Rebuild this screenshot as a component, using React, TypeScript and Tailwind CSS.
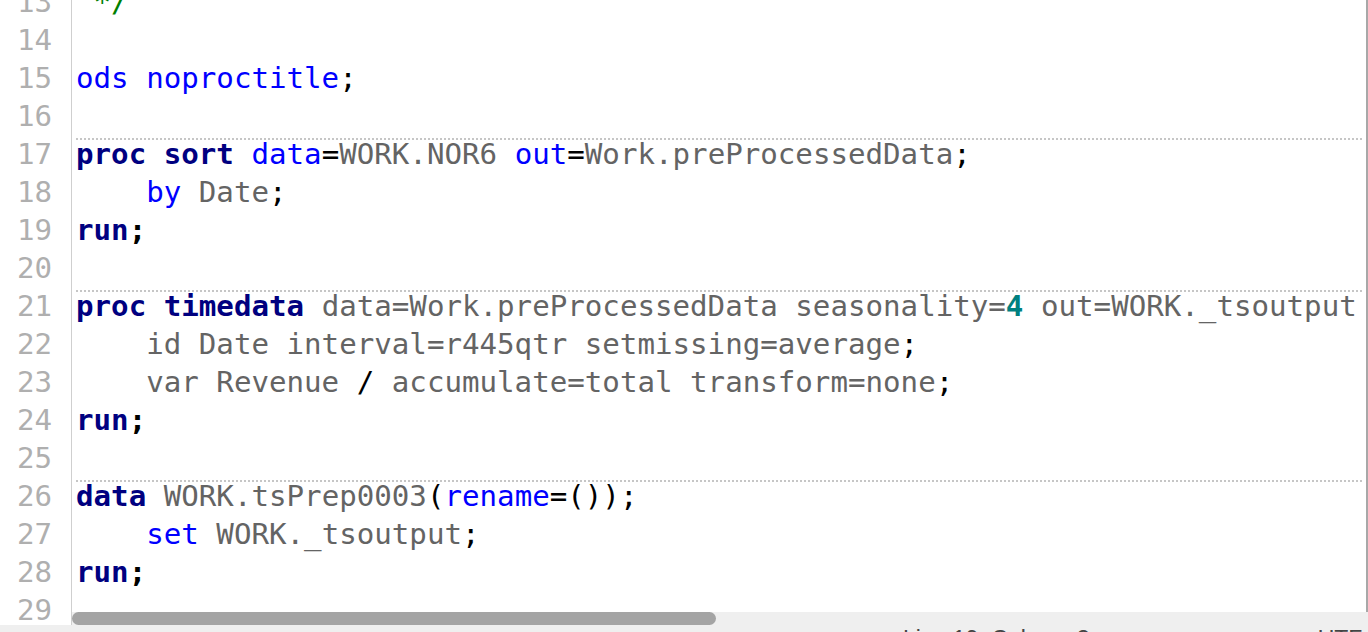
import React from "react";

type Tok = [string, string];

// token colours, SAS editor style
const K = "text-[#000080] font-bold";
const B = "text-[#0000ff]";
const G = "text-[#646464]";
const P = "text-black";
const PB = "text-black font-bold";
const N = "text-[#008080] font-bold";
const C = "text-[#008000]";

const lines: { n: number; sep?: boolean; toks: Tok[] }[] = [
  { n: 13, toks: [[" */", C]] },
  { n: 14, toks: [] },
  { n: 15, toks: [["ods noproctitle", B], [";", P]] },
  { n: 16, toks: [] },
  {
    n: 17,
    sep: true,
    toks: [
      ["proc sort ", K],
      ["data", B],
      ["=", P],
      ["WORK.NOR6 ", G],
      ["out", B],
      ["=", P],
      ["Work.preProcessedData", G],
      [";", P],
    ],
  },
  { n: 18, toks: [["    ", G], ["by", B], [" Date", G], [";", P]] },
  { n: 19, toks: [["run", K], [";", PB]] },
  { n: 20, toks: [] },
  {
    n: 21,
    sep: true,
    toks: [
      ["proc timedata ", K],
      ["data=Work.preProcessedData seasonality=", G],
      ["4", N],
      [" out=WORK._tsoutput", G],
      [";", P],
    ],
  },
  { n: 22, toks: [["    id Date interval=r445qtr setmissing=average", G], [";", P]] },
  {
    n: 23,
    toks: [
      ["    var Revenue ", G],
      ["/", P],
      [" accumulate=total transform=none", G],
      [";", P],
    ],
  },
  { n: 24, toks: [["run", K], [";", PB]] },
  { n: 25, toks: [] },
  {
    n: 26,
    sep: true,
    toks: [
      ["data", K],
      [" WORK.tsPrep0003", G],
      ["(", P],
      ["rename", B],
      ["=());", P],
    ],
  },
  { n: 27, toks: [["    ", G], ["set", B], [" WORK._tsoutput", G], [";", P]] },
  { n: 28, toks: [["run", K], [";", PB]] },
  { n: 29, toks: [] },
  { n: 30, toks: [] },
];

const App = () => {
  return (
    <div className="w-[1368px] h-[632px] overflow-hidden bg-white flex flex-col font-['DejaVu_Sans_Mono',monospace] text-[29.15px] leading-[38px]">
      <div className="flex h-[625px] shrink-0">
        {/* Gutter */}
        <div className="w-[72px] shrink-0 bg-white border-r border-[#cfcfcf] overflow-hidden">
          <div className="-mt-[17px] pr-[19px] text-right text-[#afafaf]">
            {lines.map((l) => (
              <div key={l.n} className="h-[38px] whitespace-pre">
                {l.n}
              </div>
            ))}
          </div>
        </div>

        {/* Code + horizontal scrollbar */}
        <div className="flex-1 min-w-0 flex flex-col">
          <div className="h-[612px] shrink-0 px-[4px] border-r-2 border-[#a8a8a8] overflow-hidden">
            <div className="-mt-[17px] overflow-hidden">
              {lines.map((l) => (
                <div
                  key={l.n}
                  className={`h-[38px] whitespace-pre ${
                    l.sep
                      ? "bg-[linear-gradient(to_right,#c6c6c6_50%,transparent_50%)] bg-[length:4px_2px] bg-repeat-x bg-[position:0_3px]"
                      : ""
                  }`}
                >
                  {l.toks.map(([t, c], i) => (
                    <span key={i} className={c}>
                      {t}
                    </span>
                  ))}
                </div>
              ))}
            </div>
          </div>
          <div className="flex-1 bg-[#efefef]">
            <div className="h-[13px] w-[644px] rounded-[7px] bg-[#a4a4a4]" />
          </div>
        </div>
      </div>

      {/* Status bar */}
      <div className="flex-1 bg-[#efefef] flex pl-[903px] pt-[3px] gap-[228px] whitespace-nowrap font-['Liberation_Sans',Arial,sans-serif] text-[23px] leading-none text-[#444444]">
        <span>Line 19, Column 3</span>
        <span>UTF-8</span>
      </div>
    </div>
  );
};

export default App;
